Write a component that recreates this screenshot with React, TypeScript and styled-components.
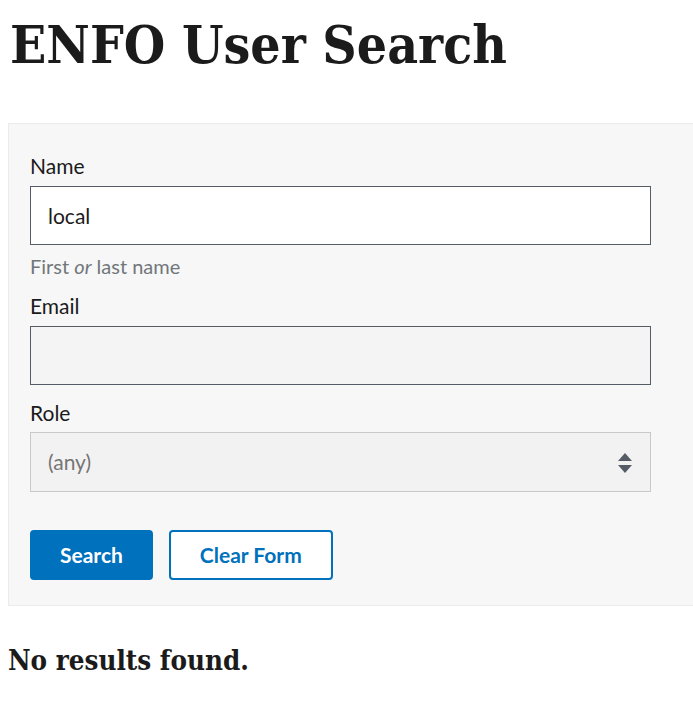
import React, { useState } from "react";
import styled, { createGlobalStyle } from "styled-components";

const GlobalStyle = createGlobalStyle`
  html {
    background: #ffffff;
    overflow: hidden;
  }
  body {
    margin: 8px 0 8px 8px;
    color: #1b1b1b;
    font-family: "Lato", "Liberation Sans", sans-serif;
  }
`;

const Page = styled.main`
  display: flex;
  flex-direction: column;
`;

const Title = styled.h1`
  margin: 4px 0 46px 2px;
  font-family: "DejaVu Serif Condensed", "DejaVu Serif", serif;
  font-stretch: condensed;
  font-size: 53px;
  line-height: 1.22;
  font-weight: 700;
  color: #1b1b1b;
  white-space: nowrap;
`;

// panel runs past the right edge of the window, as in the original page
const Panel = styled.form`
  margin-right: -24px;
  box-sizing: border-box;
  background: #f7f7f7;
  border: 1px solid #ebebeb;
  padding: 28px 21px 25px;
  display: flex;
  flex-direction: column;
`;

const Field = styled.div`
  display: flex;
  flex-direction: column;
  width: 621px;
`;

const Label = styled.label<{ $gap?: number }>`
  margin-top: ${(p) => p.$gap ?? 0}px;
  font-size: 21px;
  line-height: 28px;
  color: #1b1b1b;
`;

const Hint = styled.span`
  margin-top: 6px;
  font-size: 20px;
  line-height: 30px;
  color: #71767a;
  em {
    font-style: italic;
  }
`;

const Input = styled.input<{ $filled?: boolean }>`
  margin-top: 6px;
  box-sizing: border-box;
  width: 100%;
  height: 59px;
  padding: 0 17px;
  border: 1px solid #565c65;
  border-radius: 0;
  background: ${(p) => (p.$filled ? "#ffffff" : "#f4f4f4")};
  font-family: "Lato", "Liberation Sans", sans-serif;
  font-size: 21px;
  color: #1b1b1b;
  outline: none;
`;

const SelectBox = styled.div`
  position: relative;
  margin-top: 5px;
  box-sizing: border-box;
  width: 100%;
  height: 60px;
  border: 1px solid #c9c9c9;
  background: #f2f2f2;
  display: flex;
  align-items: center;
  padding: 0 17px;
  font-size: 21px;
  color: #757575;
`;

const Arrows = styled.svg`
  position: absolute;
  right: 18px;
  top: 20px;
`;

const Actions = styled.div`
  margin-top: 38px;
  display: flex;
  gap: 16px;
`;

const Button = styled.button<{ $outline?: boolean }>`
  box-sizing: border-box;
  height: 50px;
  padding: 0 ${(p) => (p.$outline ? 29 : 28)}px;
  border-radius: 4px;
  border: 2px solid #0071bc;
  background: ${(p) => (p.$outline ? "#ffffff" : "#0071bc")};
  color: ${(p) => (p.$outline ? "#0071bc" : "#ffffff")};
  font-family: "Lato", "Liberation Sans", sans-serif;
  font-size: 21px;
  font-weight: 700;
  cursor: pointer;
`;

const Empty = styled.p`
  margin: 37px 0 0;
  font-family: "DejaVu Serif Condensed", "DejaVu Serif", serif;
  font-stretch: condensed;
  font-size: 27.5px;
  font-weight: 700;
  line-height: 1.3;
  color: #1b1b1b;
`;

const App = () => {
  const [name, setName] = useState("local");
  const [email, setEmail] = useState("");

  const clearForm = () => {
    setName("");
    setEmail("");
  };

  return (
    <>
      <GlobalStyle />
      <Page>
        <Title>ENFO User Search</Title>
        <Panel onSubmit={(e) => e.preventDefault()}>
          <Field>
            <Label htmlFor="name">Name</Label>
            <Input
              id="name"
              $filled
              value={name}
              onChange={(e) => setName(e.currentTarget.value)}
            />
            <Hint>
              First <em>or</em> last name
            </Hint>
          </Field>
          <Field>
            <Label htmlFor="email" $gap={11}>
              Email
            </Label>
            <Input
              id="email"
              value={email}
              onChange={(e) => setEmail(e.currentTarget.value)}
            />
          </Field>
          <Field>
            <Label $gap={14}>Role</Label>
            <SelectBox>
              (any)
              <Arrows width="14" height="20" viewBox="0 0 14 20">
                <path d="M7 0 L14 8 L0 8 Z" fill="#565c65" />
                <path d="M0 12 L14 12 L7 20 Z" fill="#565c65" />
              </Arrows>
            </SelectBox>
          </Field>
          <Actions>
            <Button type="submit">Search</Button>
            <Button type="button" $outline onClick={clearForm}>
              Clear Form
            </Button>
          </Actions>
        </Panel>
        <Empty>No results found.</Empty>
      </Page>
    </>
  );
};

export default App;
